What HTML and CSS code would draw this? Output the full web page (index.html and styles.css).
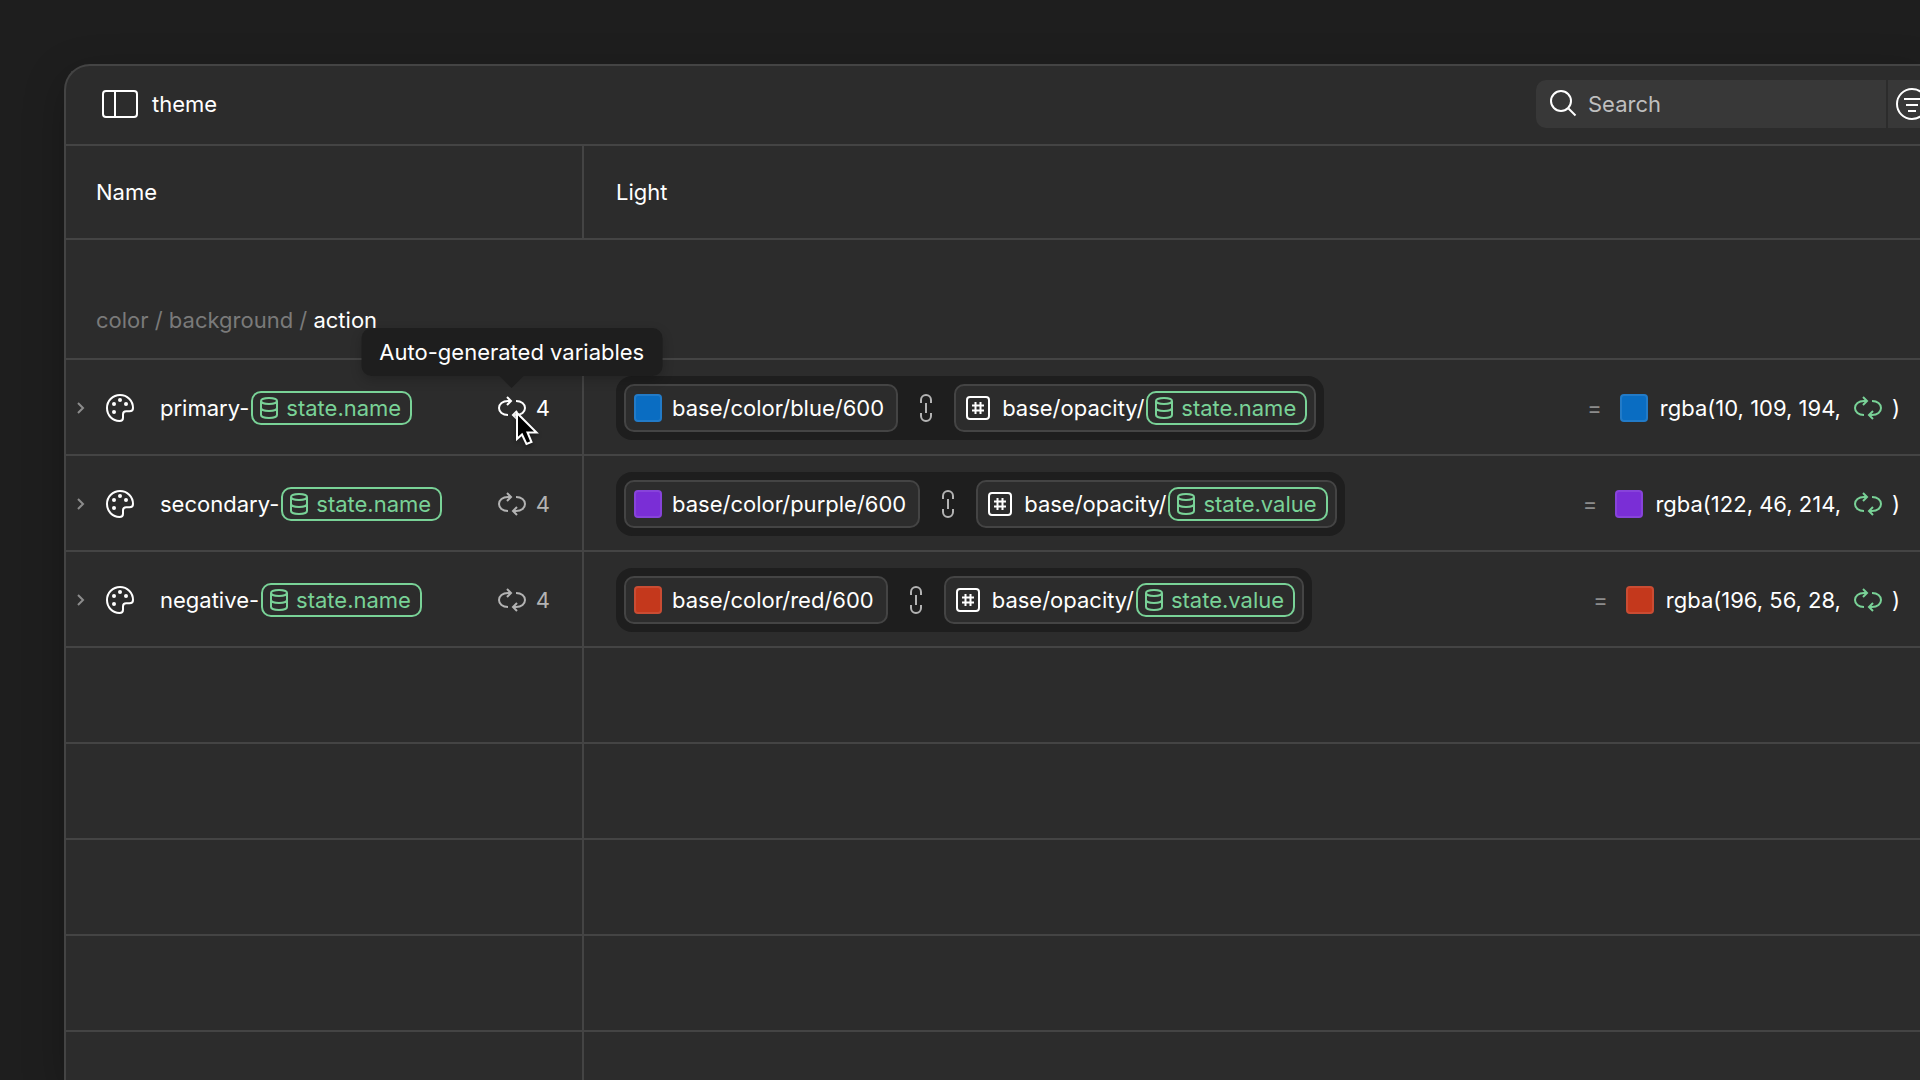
FILE: index.html
```html
<!DOCTYPE html>
<html lang="en">
<head>
    <meta charset="UTF-8">
    <meta name="viewport" content="width=device-width, initial-scale=1.0">
    <title>theme</title>
    <link rel="stylesheet" href="styles.css">
</head>
<body>
    <svg class="sprite" aria-hidden="true">
        <symbol id="i-chevron" viewBox="0 0 8 12"><path d="M1 1l5 5-5 5"/></symbol>
        <symbol id="i-palette" viewBox="0 0 28 28">
            <path d="M14 1C6.800 1 1 6.800 1 14s5.500 13 12.500 13c2.200 0 3.500-1.300 3.500-3.300V20.500c0-2 1.200-3.200 3.200-3.200h3.300c2.200 0 3.500-1.200 3.500-3.300C27 6.500 21.200 1 14 1z"/>
            <g class="dots"><circle cx="8" cy="10" r="2"/><circle cx="14" cy="6" r="2"/><circle cx="20" cy="10" r="2"/><circle cx="8" cy="18" r="2"/></g>
        </symbol>
        <symbol id="i-db" viewBox="0 0 18 22">
            <ellipse cx="9" cy="4" rx="8" ry="3"/>
            <path d="M1 4v14c0 1.700 3.600 3 8 3s8-1.300 8-3V4M1 11c0 1.700 3.600 3 8 3s8-1.300 8-3"/>
        </symbol>
        <symbol id="i-cycle" viewBox="0 0 28 24">
            <path d="M10 19C4.500 19 1 16 1 12s3.500-7 9-7h3M9 1l4 4-4 4"/>
            <path d="M18 5c5.500 0 9 3 9 7s-3.500 7-9 7h-3M19 23l-4-4 4-4"/>
        </symbol>
        <symbol id="i-link" viewBox="0 0 12 28">
            <path d="M1 9V6a5 5 0 0 1 10 0v3M1 19v3a5 5 0 0 0 10 0v-3M6 9v10"/>
        </symbol>
        <symbol id="i-number" viewBox="0 0 24 24">
            <rect x="1" y="1" width="22" height="22" rx="3"/>
            <path d="M9.500 6v12M14.500 6v12M6 9.500h12M6 14.500h12"/>
        </symbol>
    </svg>

    <div class="window">
        <header class="toolbar">
            <button type="button" class="icon-btn" aria-label="Toggle sidebar">
                <svg width="36" height="28" viewBox="0 0 36 28"><rect x="1" y="1" width="34" height="26" rx="3"/><path d="M13 1v26"/></svg>
            </button>
            <h1>theme</h1>
            <label class="search">
                <svg width="28" height="28" viewBox="0 0 28 28"><circle cx="11" cy="11" r="10"/><path d="M18.500 18.500L25.500 25.500"/></svg>
                <input type="search" placeholder="Search" aria-label="Search">
            </label>
            <button type="button" class="filter" aria-label="Filter">
                <svg width="32" height="32" viewBox="0 0 32 32"><circle cx="16" cy="16" r="15"/><path d="M8 11h16M10 17h12M12 23h8"/></svg>
            </button>
        </header>

        <table class="variables">
            <thead>
                <tr><th class="col-name" scope="col">Name</th><th scope="col">Light</th></tr>
            </thead>
            <tbody>
                <tr class="group">
                    <th colspan="2" scope="colgroup">color / background / <b>action</b></th>
                </tr>
                <tr>
                    <td>
                        <div class="name">
                            <button type="button" class="expand" aria-label="Expand"><svg width="8" height="12"><use href="#i-chevron"/></svg></button>
                            <svg class="type" width="28" height="28"><use href="#i-palette"/></svg>
                            <span>primary-</span><span class="chip"><svg width="18" height="22"><use href="#i-db"/></svg>state.name</span>
                            <button type="button" class="count active" aria-describedby="tip">
                                <svg width="28" height="24"><use href="#i-cycle"/></svg>4
                                <span class="tooltip" id="tip" role="tooltip">Auto-generated variables</span>
                                <svg class="cursor" width="28" height="40" viewBox="0 0 28 40"><path d="M3 6v26l5-4.500 4.500 9.500 5-2-4-9.500h9z"/></svg>
                            </button>
                        </div>
                    </td>
                    <td>
                        <div class="value">
                            <div class="expr">
                                <span class="token"><i class="swatch blue"></i>base/color/blue/600</span>
                                <svg class="link" width="12" height="28"><use href="#i-link"/></svg>
                                <span class="token with-chip"><svg class="number" width="24" height="24"><use href="#i-number"/></svg>base/opacity/<span class="chip"><svg width="18" height="22"><use href="#i-db"/></svg>state.name</span></span>
                            </div>
                            <div class="result"><span class="equals">=</span><i class="swatch blue"></i><span>rgba(10, 109, 194,</span><svg width="28" height="24"><use href="#i-cycle"/></svg><span>)</span></div>
                        </div>
                    </td>
                </tr>
                <tr>
                    <td>
                        <div class="name">
                            <button type="button" class="expand" aria-label="Expand"><svg width="8" height="12"><use href="#i-chevron"/></svg></button>
                            <svg class="type" width="28" height="28"><use href="#i-palette"/></svg>
                            <span>secondary-</span><span class="chip"><svg width="18" height="22"><use href="#i-db"/></svg>state.name</span>
                            <button type="button" class="count"><svg width="28" height="24"><use href="#i-cycle"/></svg>4</button>
                        </div>
                    </td>
                    <td>
                        <div class="value">
                            <div class="expr">
                                <span class="token"><i class="swatch purple"></i>base/color/purple/600</span>
                                <svg class="link" width="12" height="28"><use href="#i-link"/></svg>
                                <span class="token with-chip"><svg class="number" width="24" height="24"><use href="#i-number"/></svg>base/opacity/<span class="chip"><svg width="18" height="22"><use href="#i-db"/></svg>state.value</span></span>
                            </div>
                            <div class="result"><span class="equals">=</span><i class="swatch purple"></i><span>rgba(122, 46, 214,</span><svg width="28" height="24"><use href="#i-cycle"/></svg><span>)</span></div>
                        </div>
                    </td>
                </tr>
                <tr>
                    <td>
                        <div class="name">
                            <button type="button" class="expand" aria-label="Expand"><svg width="8" height="12"><use href="#i-chevron"/></svg></button>
                            <svg class="type" width="28" height="28"><use href="#i-palette"/></svg>
                            <span>negative-</span><span class="chip"><svg width="18" height="22"><use href="#i-db"/></svg>state.name</span>
                            <button type="button" class="count"><svg width="28" height="24"><use href="#i-cycle"/></svg>4</button>
                        </div>
                    </td>
                    <td>
                        <div class="value">
                            <div class="expr">
                                <span class="token"><i class="swatch red"></i>base/color/red/600</span>
                                <svg class="link" width="12" height="28"><use href="#i-link"/></svg>
                                <span class="token with-chip"><svg class="number" width="24" height="24"><use href="#i-number"/></svg>base/opacity/<span class="chip"><svg width="18" height="22"><use href="#i-db"/></svg>state.value</span></span>
                            </div>
                            <div class="result"><span class="equals">=</span><i class="swatch red"></i><span>rgba(196, 56, 28,</span><svg width="28" height="24"><use href="#i-cycle"/></svg><span>)</span></div>
                        </div>
                    </td>
                </tr>
                <tr><td></td><td></td></tr>
                <tr><td></td><td></td></tr>
                <tr><td></td><td></td></tr>
                <tr><td></td><td></td></tr>
                <tr><td></td><td></td></tr>
            </tbody>
        </table>
    </div>
</body>
</html>
```
FILE: styles.css
```css
*{
    margin:0;
    padding:0;
    box-sizing:border-box;
}

body{
    height:100vh;
    padding:64px 0 0 64px;
    overflow:hidden;
    background:#1e1e1e;
    color:#fff;
    font:400 22px/32px Inter, sans-serif;
}

svg{
    flex:none;
    fill:none;
    stroke:currentColor;
    stroke-width:2;
}

.sprite{
    display:none;
}

.dots{
    fill:currentColor;
    stroke:none;
}

button, input{
    border:0;
    background:none;
    color:inherit;
    font:inherit;
}

.window{
    height:100%;
    overflow:hidden;
    background:#2c2c2c;
    border:2px solid #444;
    border-width:2px 0 0 2px;
    border-radius:26px 0 0 0;
    box-shadow:0 12px 40px rgba(0,0,0,0.25);
}

/* toolbar */
.toolbar{
    display:flex;
    align-items:center;
    height:80px;
    padding:0 0 2px 36px;
    border-bottom:2px solid #444;
    overflow:hidden;
}

.toolbar h1{
    flex:1;
    margin-left:14px;
    font-size:22px;
    font-weight:400;
}

.icon-btn{
    display:flex;
}

.search{
    display:flex;
    align-items:center;
    gap:10px;
    width:350px;
    height:48px;
    padding:0 14px;
    background:#383838;
    border-radius:10px 0 0 10px;
}

.search input{
    flex:1;
    min-width:0;
    outline:0;
}

.search input::placeholder{
    color:#bfbfbf;
}

.filter{
    display:flex;
    align-items:center;
    justify-content:center;
    flex:none;
    width:48px;
    height:48px;
    margin:0 -16px 0 2px;
    background:#383838;
}

/* table */
.variables{
    width:100%;
    table-layout:fixed;
    border-spacing:0;
}

.variables th, .variables td{
    height:96px;
    text-align:left;
    font-weight:400;
    box-shadow:inset 0 -2px #444;
}

.variables thead th{
    height:94px;
    padding:0 30px 2px;
}

.variables .col-name{
    width:518px;
}

.variables td:first-child, .variables .col-name{
    box-shadow:inset -2px -2px #444;
}

.variables thead th + th{
    padding-left:32px;
}

.variables .group th{
    height:120px;
    padding:0 30px 24px;
    vertical-align:bottom;
    color:#7a7a7a;
}

.group b{
    color:#fff;
    font-weight:400;
}

.name{
    display:flex;
    align-items:center;
    padding:0 34px 0 11px;
}

.expand{
    display:flex;
    color:#8c8c8c;
}

.type{
    margin:0 26px 0 21px;
}

.chip{
    display:flex;
    align-items:center;
    gap:8px;
    height:34px;
    margin-left:2px;
    padding:0 9px 0 7px;
    color:#79d297;
    border:2px solid #79d297;
    border-radius:10px;
}

.count{
    position:relative;
    display:flex;
    align-items:center;
    gap:10px;
    margin-left:auto;
    color:#b3b3b3;
}

.count.active{
    color:#fff;
}

.tooltip{
    position:absolute;
    z-index:1;
    bottom:48px;
    left:14px;
    padding:8px 18px;
    white-space:nowrap;
    background:#1e1e1e;
    border-radius:10px;
    box-shadow:0 4px 12px rgba(0,0,0,0.2);
    transform:translateX(-50%);
}

.tooltip::after{
    content:"";
    position:absolute;
    top:100%;
    left:50%;
    margin-left:-12px;
    border:12px solid transparent;
    border-top-color:#1e1e1e;
    border-bottom:0;
}

.cursor{
    position:absolute;
    z-index:2;
    top:15px;
    left:16px;
    fill:#000;
    stroke:#fff;
    filter:drop-shadow(0 2px 2px rgba(0,0,0,0.4));
}

.value{
    display:flex;
    align-items:center;
    justify-content:space-between;
    padding:0 20px 0 32px;
}

.expr{
    display:flex;
    align-items:center;
    padding:8px;
    background:#1e1e1e;
    border-radius:16px;
}

.token{
    display:flex;
    align-items:center;
    height:48px;
    padding:0 12px 0 8px;
    background:#2c2c2c;
    border:2px solid #444;
    border-radius:10px;
}

.token.with-chip{
    padding-right:7px;
}

.token .swatch{
    margin-right:10px;
}

.number{
    margin:0 12px 0 2px;
}

.link{
    margin:0 22px;
    color:#b3b3b3;
}

.swatch{
    flex:none;
    width:28px;
    height:28px;
    border:2px solid rgba(255,255,255,0.1);
    border-radius:4px;
}

.blue{
    background-color:#0a6dc2;
}

.purple{
    background-color:#7a2ed6;
}

.red{
    background-color:#c4381c;
}

.result{
    display:flex;
    align-items:center;
    gap:10px;
    white-space:pre;
}

.result .swatch + span{
    margin:0 3px 0 2px;
}

.result svg{
    color:#79d297;
}

.equals{
    margin-right:8px;
    color:#8c8c8c;
}
```
